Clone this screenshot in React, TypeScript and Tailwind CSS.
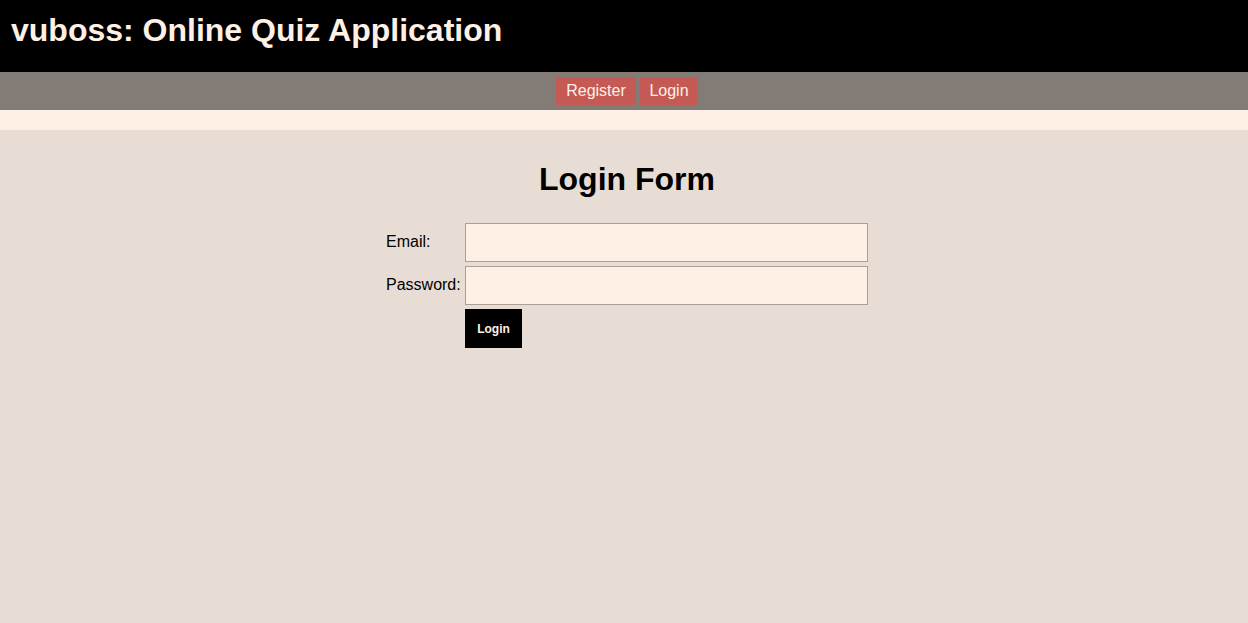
const App = () => {
  return (
    <div className="min-h-[623px] bg-[#e8ddd4] font-['Liberation_Sans',Arial,sans-serif]">
      {/* Header */}
      <header className="h-[72px] bg-black px-[11px] pt-[12px]">
        <h1 className="text-[32px] font-bold leading-[37px] text-[#fff0e6]">vuboss: Online Quiz Application</h1>
      </header>

      {/* Nav */}
      <nav className="flex h-[38px] items-center justify-center gap-[4px] bg-[#837b75] pl-[6px]">
        <a className="flex h-[28px] w-[80px] items-center justify-center bg-[#c55a55] text-[16px] text-[#fff0e6]">Register</a>
        <a className="flex h-[28px] w-[58px] items-center justify-center bg-[#c55a55] text-[16px] text-[#fff0e6]">Login</a>
      </nav>
      <div className="h-[20px] bg-[#fff0e6]" />

      {/* Main */}
      <main className="flex flex-col items-center pl-[6px] pt-[31px]">
        <h2 className="text-[32px] font-bold leading-[37px] text-black">Login Form</h2>
        <form className="mt-[25px] flex flex-col gap-[4px]">
          <div className="flex items-center">
            <label className="mb-[2px] w-[79px] text-[16px] text-black">Email:</label>
            <input type="email" className="h-[39px] w-[403px] border border-[#aaa098] bg-[#fff0e6] outline-none" />
          </div>
          <div className="flex items-center">
            <label className="mb-[2px] w-[79px] text-[16px] text-black">Password:</label>
            <input type="password" className="h-[39px] w-[403px] border border-[#aaa098] bg-[#fff0e6] outline-none" />
          </div>
          <div className="flex">
            <div className="w-[79px]" />
            <button type="button" className="h-[39px] w-[57px] bg-black text-[12px] font-bold text-[#fff0e6]">Login</button>
          </div>
        </form>
      </main>
    </div>
  )
}

export default App
